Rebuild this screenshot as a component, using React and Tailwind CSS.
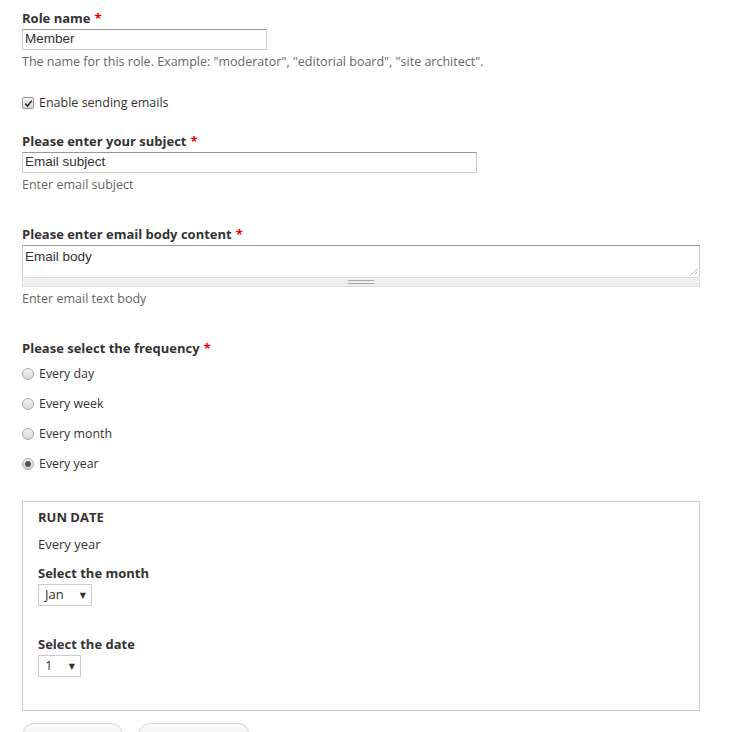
import React from 'react';

const FONT = { fontFamily: '"Open Sans", "DejaVu Sans", sans-serif' };
const INPUT_FONT = { fontFamily: '"Liberation Sans", Arial, sans-serif' };

function Label({ children, required }) {
  return (
    <div className="text-[13px] leading-[18px] font-bold text-[#333]">
      {children}
      {required && <span className="text-[#e00] ml-1">*</span>}
    </div>
  );
}

function Description({ children }) {
  return <div className="text-[12.5px] leading-[16px] text-[#666] mt-1">{children}</div>;
}

function TextInput({ value, width }) {
  return (
    <div
      className="mt-[2px] h-[21px] border border-[#ccc] border-t-[#999] bg-white px-[2px] flex items-center text-[13.5px] text-[#333]"
      style={{ ...INPUT_FONT, width }}
    >
      {value}
    </div>
  );
}

function Checkbox({ checked }) {
  return (
    <span className="w-[12px] h-[12px] border border-[#999] rounded-[2px] bg-gradient-to-b from-[#f4f4f4] to-[#d6d6d6] flex items-center justify-center">
      {checked && (
        <svg width="9" height="9" viewBox="0 0 10 10">
          <path d="M1.5 5.2 L4 7.8 L8.6 1.8" fill="none" stroke="#333" strokeWidth="1.8" />
        </svg>
      )}
    </span>
  );
}

function Radio({ label, checked }) {
  return (
    <div className="h-[18px] flex items-center gap-[5px] text-[12.4px] text-[#333]">
      <span className="w-[12px] h-[12px] rounded-full border border-[#aaa] bg-gradient-to-b from-[#f3f3f3] to-[#d8d8d8] flex items-center justify-center">
        {checked && <span className="w-[6px] h-[6px] rounded-full bg-[#555]" />}
      </span>
      <span>{label}</span>
    </div>
  );
}

function FakeSelect({ value, width }) {
  return (
    <div
      className="mt-[2px] h-[22px] border border-[#ccc] bg-white pl-[6px] pr-[5px] flex items-center justify-between text-[13px] text-[#333]"
      style={{ width }}
    >
      <span>{value}</span>
      <span className="text-[8px] text-[#333]">▼</span>
    </div>
  );
}

export default function App() {
  return (
    <div className="w-[731px] h-[732px] overflow-hidden bg-white" style={FONT}>
      <div className="pl-[22px] pr-[31px] pt-[9px]">
        {/* Role name */}
        <Label required>Role name</Label>
        <TextInput value="Member" width={245} />
        <Description>The name for this role. Example: "moderator", "editorial board", "site architect".</Description>

        {/* Enable emails */}
        <div className="mt-[24px] h-[18px] flex items-center gap-[5px] text-[12.5px] text-[#333]">
          <Checkbox checked />
          <span>Enable sending emails</span>
        </div>

        {/* Subject */}
        <div className="mt-[20px]">
          <Label required>Please enter your subject</Label>
          <TextInput value="Email subject" width={455} />
          <Description>Enter email subject</Description>
        </div>

        {/* Body */}
        <div className="mt-[32px]">
          <Label required>Please enter email body content</Label>
          <div className="mt-[2px] w-[678px]">
            <div
              className="relative h-[32px] border border-[#ccc] border-t-[#999] border-b-0 bg-white px-[2px] pt-[3px] text-[13.5px] leading-[16px] text-[#333]"
              style={INPUT_FONT}
            >
              Email body
              <svg className="absolute right-[1px] bottom-[1px]" width="9" height="9" viewBox="0 0 9 9">
                <path d="M8 2 L2 8 M8 5 L5 8" stroke="#777" strokeWidth="1" strokeDasharray="1 1" />
              </svg>
            </div>
            <div className="h-[10px] border border-[#ddd] bg-[#eee] flex flex-col items-center justify-center gap-[2px]">
              <span className="block w-[26px] h-px bg-[#aaa]" />
              <span className="block w-[26px] h-px bg-[#aaa]" />
            </div>
          </div>
          <Description>Enter email text body</Description>
        </div>

        {/* Frequency */}
        <div className="mt-[32px]">
          <Label required>Please select the frequency</Label>
          <div className="mt-[8px] flex flex-col gap-[12px]">
            <Radio label="Every day" />
            <Radio label="Every week" />
            <Radio label="Every month" />
            <Radio label="Every year" checked />
          </div>
        </div>

        {/* Run date fieldset */}
        <div className="mt-[28px] w-[678px] h-[210px] border border-[#ccc] pl-[15px] pt-[6px]">
          <div className="text-[13px] leading-[18px] font-bold text-[#333] uppercase">Run date</div>
          <div className="mt-[10px] text-[13px] leading-[16px] text-[#333]">Every year</div>
          <div className="mt-[12px]">
            <Label>Select the month</Label>
            <FakeSelect value="Jan" width={54} />
          </div>
          <div className="mt-[29px]">
            <Label>Select the date</Label>
            <FakeSelect value="1" width={43} />
          </div>
        </div>

        {/* Buttons */}
        <div className="mt-[12px] flex gap-[15px]">
          <div className="w-[101px] h-[30px] rounded-[12px] border border-[#d4d4d4] bg-gradient-to-b from-[#fafafa] to-[#ececec]" />
          <div className="w-[112px] h-[30px] rounded-[12px] border border-[#d4d4d4] bg-gradient-to-b from-[#fafafa] to-[#ececec]" />
        </div>
      </div>
    </div>
  );
}
